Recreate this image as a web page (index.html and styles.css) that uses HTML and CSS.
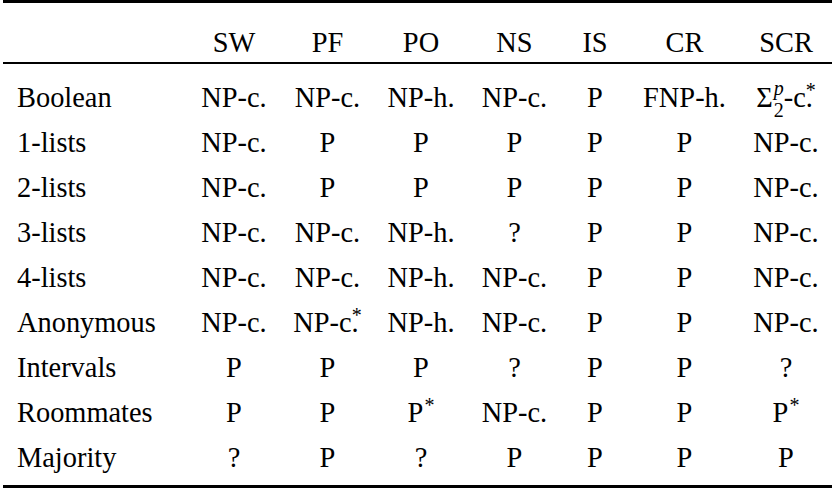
FILE: index.html
```html
<!DOCTYPE html>
<html>
<head>
<meta charset="utf-8">
<link rel="stylesheet" href="styles.css">
</head>
<body>
<div class="tab">
  <div class="head">
    <div class="cell lbl"></div>
    <div class="cell">SW</div>
    <div class="cell">PF</div>
    <div class="cell">PO</div>
    <div class="cell">NS</div>
    <div class="cell">IS</div>
    <div class="cell">CR</div>
    <div class="cell">SCR</div>
  </div>
  <div class="rows">
    <div class="cell lbl">Boolean</div><div class="cell">NP-c.</div><div class="cell">NP-c.</div><div class="cell">NP-h.</div><div class="cell">NP-c.</div><div class="cell">P</div><div class="cell">FNP-h.</div><div class="cell"><span class="sig">Σ<span class="scripts"><span class="sp">p</span><span class="sb">2</span></span></span>-c.<span class="ast">*</span></div>
    <div class="cell lbl">1-lists</div><div class="cell">NP-c.</div><div class="cell">P</div><div class="cell">P</div><div class="cell">P</div><div class="cell">P</div><div class="cell">P</div><div class="cell">NP-c.</div>
    <div class="cell lbl">2-lists</div><div class="cell">NP-c.</div><div class="cell">P</div><div class="cell">P</div><div class="cell">P</div><div class="cell">P</div><div class="cell">P</div><div class="cell">NP-c.</div>
    <div class="cell lbl">3-lists</div><div class="cell">NP-c.</div><div class="cell">NP-c.</div><div class="cell">NP-h.</div><div class="cell">?</div><div class="cell">P</div><div class="cell">P</div><div class="cell">NP-c.</div>
    <div class="cell lbl">4-lists</div><div class="cell">NP-c.</div><div class="cell">NP-c.</div><div class="cell">NP-h.</div><div class="cell">NP-c.</div><div class="cell">P</div><div class="cell">P</div><div class="cell">NP-c.</div>
    <div class="cell lbl">Anonymous</div><div class="cell">NP-c.</div><div class="cell">NP-c.<span class="ast">*</span></div><div class="cell">NP-h.</div><div class="cell">NP-c.</div><div class="cell">P</div><div class="cell">P</div><div class="cell">NP-c.</div>
    <div class="cell lbl">Intervals</div><div class="cell">P</div><div class="cell">P</div><div class="cell">P</div><div class="cell">?</div><div class="cell">P</div><div class="cell">P</div><div class="cell">?</div>
    <div class="cell lbl">Roommates</div><div class="cell">P</div><div class="cell">P</div><div class="cell">P<span class="astp">*</span></div><div class="cell">NP-c.</div><div class="cell">P</div><div class="cell">P</div><div class="cell">P<span class="astp">*</span></div>
    <div class="cell lbl">Majority</div><div class="cell">?</div><div class="cell">P</div><div class="cell">?</div><div class="cell">P</div><div class="cell">P</div><div class="cell">P</div><div class="cell">P</div>
  </div>
</div>
</body>
</html>
```
FILE: styles.css
```css
body {
  margin: 0;
  background: #ffffff;
  color: #000000;
  font-family: "Liberation Serif", serif;
}
.tab {
  margin-left: 3px;
  width: 829px;
  border-top: 3px solid #000;
  border-bottom: 3px solid #000;
}
.head,
.rows {
  display: grid;
  grid-template-columns: 184px 94px 93px 94px 93px 68px 111px 92px;
}
.head {
  padding-top: 21px;
  border-bottom: 2px solid #000;
  grid-auto-rows: 38px;
}
.rows {
  padding-top: 11px;
  padding-bottom: 5px;
  grid-auto-rows: 45px;
}
.cell {
  font-family: "Liberation Serif", serif;
  font-size: 28.4px;
  text-align: center;
  white-space: nowrap;
}
.head .cell {
  line-height: 38px;
}
.rows .cell {
  line-height: 45px;
}
.lbl {
  text-align: left;
  padding-left: 14px;
}
.sig {
  display: inline-flex;
  align-items: center;
  line-height: 1;
}
.scripts {
  display: inline-flex;
  flex-direction: column;
  align-items: flex-start;
  font-size: 20px;
  line-height: 0.8;
  margin-left: 1px;
}
.sp {
  font-style: italic;
  position: relative;
  top: -2px;
}
.sb {
  position: relative;
  top: 4px;
}
.ast {
  display: inline-block;
  font-size: 20px;
  vertical-align: 10px;
  margin-left: -7px;
  line-height: 1;
}
.astp {
  display: inline-block;
  font-size: 20px;
  vertical-align: 10px;
  margin-left: 1px;
  line-height: 1;
}
```
